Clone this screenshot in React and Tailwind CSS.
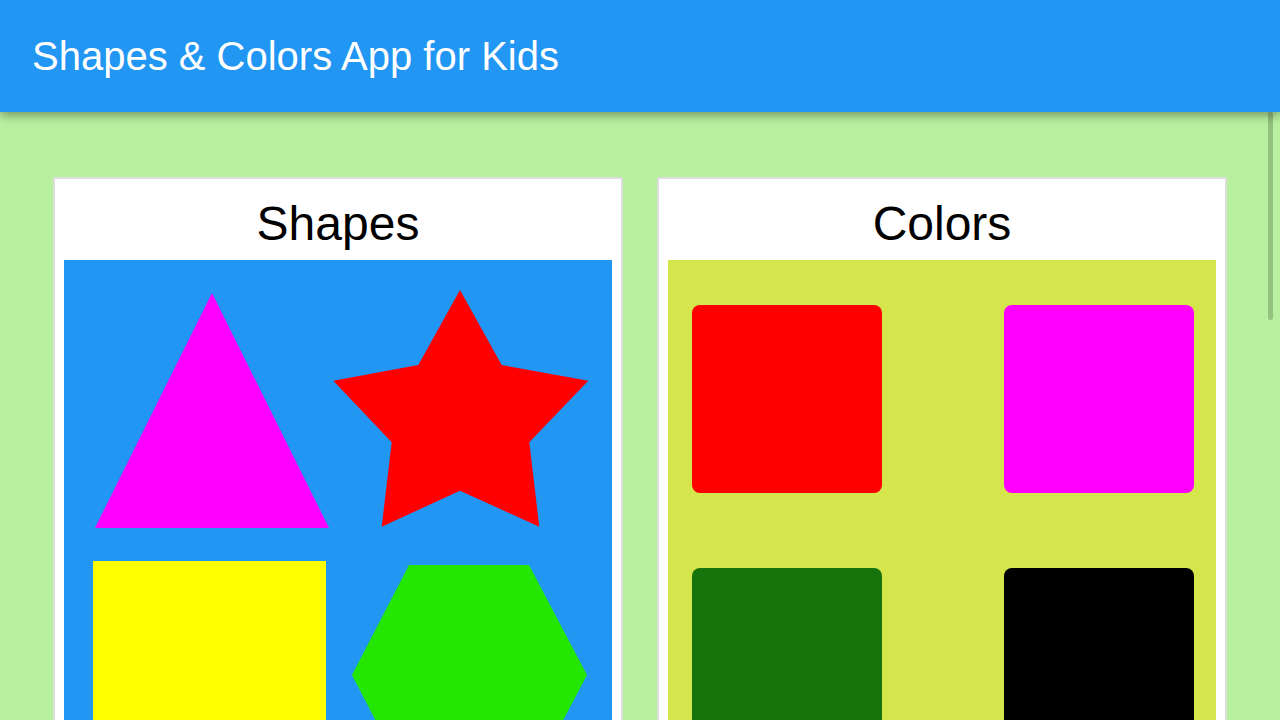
import React from 'react';

const SHAPES = [
  { id: 'triangle', w: 240, h: 240, fill: '#ff00ff', points: '119,4 2,239 236,239' },
  {
    id: 'star', w: 256, h: 240, fill: '#ff0000',
    points: '127,1 168.7,76 255.3,91.7 196.3,153.3 206.3,237.7 127,201.7 48.7,237.7 58.7,153.3 0.3,91.7 85.3,76',
  },
  { id: 'square', w: 240, h: 240, fill: '#ffff00', points: '0,2 233,2 233,235 0,235' },
  { id: 'hexagon', w: 256, h: 240, fill: '#24e600', points: '19,116 76,6 196,6 254,116 196,226 76,226' },
];

const COLORS = ['#ff0000', '#ff00ff', '#17730b', '#000000'];

function Card({ title, children }) {
  return (
    <div className="bg-white border-2 border-[#dddddd] p-[9px]">
      <h2 className="text-center text-[48px] leading-[55px] pt-[8px] pb-[9px] text-black">{title}</h2>
      {children}
    </div>
  );
}

export default function App() {
  return (
    <div className="relative h-[720px] w-full overflow-hidden bg-[#b9f0a0] font-['Liberation_Sans',Arial,sans-serif]">
      <header className="relative z-10 h-[112px] bg-[#2196f3] flex items-center px-8 shadow-[0_3px_10px_rgba(0,0,0,0.4)]">
        <h1 className="text-white text-[40px]">Shapes &amp; Colors App for Kids</h1>
      </header>

      <main className="grid grid-cols-2 gap-[34px] px-[53px] pt-[65px]">
        <Card title="Shapes">
          <div className="bg-[#2196f3] grid grid-cols-[240px_256px] gap-y-[30px] pl-[29px] pt-[29px] pb-[30px]">
            {SHAPES.map(s => (
              <svg key={s.id} width={s.w} height={s.h} viewBox={`0 0 ${s.w} ${s.h}`}>
                <polygon points={s.points} fill={s.fill} />
              </svg>
            ))}
          </div>
        </Card>

        <Card title="Colors">
          <div className="bg-[#d4e64b] grid grid-cols-[190px_190px] justify-between pl-[24px] pr-[22px] pt-[45px] pb-[45px] gap-y-[75px]">
            {COLORS.map(c => (
              <div key={c} className="h-[188px] rounded-lg" style={{ backgroundColor: c }} />
            ))}
          </div>
        </Card>
      </main>

      {/* overlay scrollbar thumb */}
      <div className="absolute right-[7px] top-[112px] w-[5px] h-[208px] rounded-full bg-black/20" />
    </div>
  );
}
